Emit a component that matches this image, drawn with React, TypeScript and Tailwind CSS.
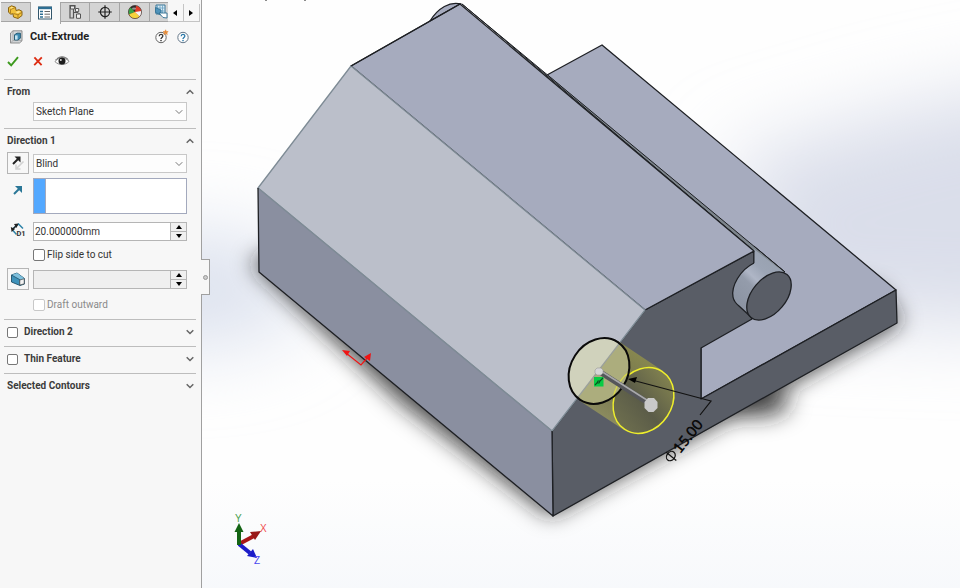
import { ReactNode, useState } from 'react'

type IconProps = { className?: string }

const PartIcon: React.FC<IconProps> = ({ className = 'size-4' }) => (
  <svg viewBox="0 0 16 16" className={className} aria-hidden="true">
    <path
      d="M1.500 3.500 4.500 1.800 8.500 3.200 9 6.500l3-.8 3 1.600v4.200L11 14.500 6.500 13 6 9.800 3.500 10.200 1.500 8z"
      fill="#f2c23c"
      stroke="#8a6516"
      strokeWidth="1"
      strokeLinejoin="round"
    />
    <path d="M3.500 5.500 8.500 3.500M3.500 5.500v4M6.500 9.500l4.500 1.300 4-2.500M11 11v3" fill="none" stroke="#a87a1c" strokeWidth=".9" />
    <path d="m3 3.800 1.800-.9 2 .7-2.200.9zM8.500 8l3.400-1 1.600.8-2.800 1.400z" fill="#ffe795" />
  </svg>
)

const PropertyIcon: React.FC<IconProps> = ({ className = 'size-4' }) => (
  <svg viewBox="0 0 16 16" className={className} aria-hidden="true">
    <rect x="1.5" y="2" width="13" height="12" fill="#fff" stroke="#33566b" />
    <path d="M1 3h14" stroke="#2d6d91" strokeWidth="2.4" />
    <path d="M3 6.500h3M3 9.200h3M3 12h3" stroke="#2d6d91" strokeWidth="1.6" />
    <path d="M7.500 6.500h5.500M7.500 9.200h5.500M7.500 12h5.500" stroke="#555" strokeWidth=".9" />
  </svg>
)

const ConfigIcon: React.FC<IconProps> = ({ className = 'size-4' }) => (
  <svg viewBox="0 0 16 16" className={className} aria-hidden="true">
    <path d="M3 14.500V1.500h5v3M3 14h3.500V5" fill="none" stroke="#555" strokeWidth="1.2" />
    <path d="M3.500 2h4v3h-4z" fill="#eee" stroke="#555" />
    <path d="M8.500 4.500h3.200v3.200H8.500zM9.500 10h4v4.300h-4z" fill="#f2f2f2" stroke="#555" />
    <path d="M6.500 8.500h4.500l1.500 1.500" fill="none" stroke="#555" />
  </svg>
)

const TargetIcon: React.FC<IconProps> = ({ className = 'size-4' }) => (
  <svg viewBox="0 0 16 16" className={className} aria-hidden="true">
    <circle cx="8" cy="8" r="4.6" fill="none" stroke="#222" strokeWidth="1.2" />
    <path d="M8 1.200v13.600M1.200 8h13.600" stroke="#222" strokeWidth="1.2" />
  </svg>
)

const AppearanceIcon: React.FC<IconProps> = ({ className = 'size-4' }) => (
  <svg viewBox="0 0 16 16" className={className} aria-hidden="true">
    <circle cx="8" cy="8" r="6.6" fill="#e03a26" />
    <path d="M8 8 4 2.800A6.600 6.600 0 0 0 2 10.600z" fill="#39a345" />
    <path d="M8 8 2 10.600A6.600 6.600 0 0 0 12.800 12.600z" fill="#f5d33c" />
    <path d="M8 8 12.800 12.600A6.600 6.600 0 0 0 14.500 7z" fill="#f4f4f4" />
    <path d="M8 8 3.400 3.300A6.600 6.600 0 0 1 9 1.500z" fill="#2a2a2a" />
    <circle cx="8" cy="8" r="6.6" fill="none" stroke="#444" strokeWidth=".7" />
    <ellipse cx="7" cy="4.6" rx="2" ry="1.2" fill="#fff" opacity=".5" />
  </svg>
)

const CamIcon: React.FC<IconProps> = ({ className = 'size-4' }) => (
  <svg viewBox="0 0 16 16" className={className} aria-hidden="true">
    <path d="M4 1h9v9H4z" fill="#dcecf5" stroke="#2d6d91" strokeWidth=".9" />
    <path d="M5.500 1v9M8 1v9M10.500 1v9M4 4h9M4 7h9" stroke="#6ba3c4" strokeWidth=".8" />
    <path d="M3.500 3.500 9 6v5L3.500 8.500z" fill="#4f93ba" stroke="#2d6d91" strokeWidth=".8" />
    <path d="m7 9 4 4.500 4 .5V9z" fill="#fff" stroke="#2d6d91" strokeWidth=".9" />
  </svg>
)

const CutExtrudeIcon: React.FC<IconProps> = ({ className = 'size-4' }) => (
  <svg viewBox="0 0 16 16" className={className} aria-hidden="true">
    <path d="M2.500 4 5 1.800h9v10L11.500 14h-9z" fill="#d5d8da" stroke="#777" strokeWidth=".8" />
    <path d="M5 1.800v9.800h9M5 11.600 2.500 14" fill="none" stroke="#999" strokeWidth=".7" />
    <path d="M6.500 5.800 9 4.200h3.400v5L10 11H6.500z" fill="#3b8ab2" stroke="#1f566f" strokeWidth=".9" />
    <path d="M7 6.400h2.600v4.200H7z" fill="#c4e3f1" />
  </svg>
)

const HelpIcon: React.FC<{ star?: boolean }> = ({ star }) => (
  <svg viewBox="0 0 16 16" className="size-4" aria-hidden="true">
    <circle cx="8" cy="8.500" r="5.2" fill="#fdfdfd" stroke={star ? '#666' : '#66788a'} strokeWidth="1" />
    <path
      d="M6.200 7.200c0-2.400 3.600-2.300 3.600-.2 0 1.400-1.800 1.400-1.800 3"
      fill="none"
      stroke={star ? '#333' : '#2a78a8'}
      strokeWidth="1.3"
    />
    <circle cx="8" cy="11.600" r=".8" fill={star ? '#333' : '#2a78a8'} />
    {star && <path d="m12.600.8.7 1.700 1.900.1-1.400 1.200.5 1.800-1.700-1-1.600 1 .4-1.800-1.400-1.200 1.900-.1z" fill="#e58a35" stroke="#e58a35" strokeWidth=".6" />}
  </svg>
)

const EyeIcon = () => (
  <svg viewBox="0 0 16 16" className="size-4" aria-hidden="true">
    <path d="M1 8.600C4 4 11.500 3.600 15 8.400 11.500 12.400 5 12.600 1 8.600z" fill="#fff" stroke="#777" strokeWidth=".9" />
    <path d="M1.600 7C5 2.800 11 2.800 14.400 6.800" fill="none" stroke="#555" strokeWidth=".9" />
    <circle cx="8" cy="8" r="3.5" fill="#1d1d1d" />
    <circle cx="6.8" cy="6.900" r="1" fill="#ddd" />
  </svg>
)

const ReverseIcon = () => (
  <svg viewBox="0 0 16 16" className="size-4" aria-hidden="true">
    <path d="m6.500 13.500 7-7M6 9.500V14h4.500" fill="none" stroke="#d2d2d2" strokeWidth="1.6" />
    <path d="m3 9 6-6" stroke="#222" strokeWidth="2" />
    <path d="M4.500 1.500h6v6z" fill="#222" />
  </svg>
)

const DirectionIcon = () => (
  <svg viewBox="0 0 16 16" className="size-4" aria-hidden="true">
    <path d="m4 12 6-6" stroke="#2a7797" strokeWidth="2" />
    <path d="M5 4h7v7z" fill="#2a7797" />
  </svg>
)

const DepthIcon = () => (
  <svg viewBox="0 0 16 16" className="size-4" aria-hidden="true">
    <path d="m2.500 7 6-5L13 6.500M2.500 8l4 4.500" fill="none" stroke="#2f83a8" strokeWidth="1.5" />
    <path d="m3 7 4-4" stroke="#222" strokeWidth="1.3" />
    <path d="M4 2 8.500 1.500 6.500 6zM.8 5l.8 5L5 7z" fill="#222" />
    <text x="6.500" y="14" fontSize="7.500" fontWeight="700" fill="#333" fontFamily="Roboto, sans-serif">
      D1
    </text>
  </svg>
)

const DraftIcon = () => (
  <svg viewBox="0 0 16 16" className="size-4" aria-hidden="true">
    <path d="M1.500 4 7 2l7.500 5.500V13l-4.500 1.500L1.500 11z" fill="#3f93bb" stroke="#1d4f68" strokeWidth=".9" />
    <path d="M1.500 4 9.500 8.500l5-1L7 2z" fill="#7fc0dd" />
    <path d="m1.500 4 8 4.500V14" fill="none" stroke="#1d4f68" strokeWidth=".8" />
    <path d="m9.800 9 4.400-1.200v5L9.800 14z" fill="#f3f3f3" stroke="#555" strokeWidth=".7" />
  </svg>
)

const Chevron: React.FC<{ up?: boolean; thin?: boolean }> = ({ up, thin }) => (
  <svg viewBox="0 0 8 8" className="size-2" aria-hidden="true">
    <path
      d={up ? 'M.7 5.800 4 2.500l3.300 3.300' : 'M.7 2.200 4 5.500l3.300-3.300'}
      fill="none"
      stroke={thin ? '#777' : '#666'}
      strokeWidth={thin ? 1 : 1.5}
    />
  </svg>
)

const tabs = [
  { label: 'Feature tree', icon: <PartIcon /> },
  { label: 'Properties', icon: <PropertyIcon /> },
  { label: 'Configurations', icon: <ConfigIcon /> },
  { label: 'Dimensions', icon: <TargetIcon /> },
  { label: 'Display', icon: <AppearanceIcon /> },
]

const TabBar: React.FC = () => {
  const [active, setActive] = useState(1)
  return (
    <div className="flex h-6 items-stretch px-px pt-0.5">
      {tabs.map((tab, i) => (
        <button
          key={tab.label}
          aria-label={tab.label}
          onClick={() => setActive(i)}
          className={
            i === active
              ? 'flex flex-1 items-center justify-center border-r border-[#a5a5a5] bg-[#f7f7f7]'
              : 'mb-0.5 flex flex-1 items-center justify-center border border-l-0 border-[#a5a5a5] bg-[#d4d4d4]'
          }
        >
          {tab.icon}
        </button>
      ))}
      <button
        aria-label="CAM"
        className="mb-0.5 flex w-[18px] items-center justify-end overflow-hidden border-y border-[#a5a5a5] bg-[#d4d4d4]"
      >
        <CamIcon className="size-4 shrink-0" />
      </button>
      {['left', 'right'].map((side) => (
        <button
          key={side}
          aria-label={`Scroll ${side}`}
          className="mt-0.5 mb-0.5 flex w-4 items-center justify-center border-r border-b border-[#c4c4c4] bg-[#f7f7f7]"
        >
          <svg viewBox="0 0 6 6" className="size-1.5" aria-hidden="true">
            <path d={side === 'left' ? 'M5 0v6L1 3z' : 'M1 0v6l4-3z'} />
          </svg>
        </button>
      ))}
    </div>
  )
}

type SectionProps = { title: string; open?: boolean; check?: boolean; children?: ReactNode }

const Section: React.FC<SectionProps> = ({ title, open, check, children }) => (
  <section className="mr-[5px] ml-1 border-t border-[#bdbdbd] pl-[3px]">
    <div className="flex h-[26px] items-center pr-0.5 pb-0.5">
      {check && (
        <input
          type="checkbox"
          aria-label={title}
          className="mr-1.5 size-[11px] appearance-none rounded-xs border border-[#777] bg-white checked:bg-[#2a7797]"
        />
      )}
      <h2 className="flex-1 font-bold text-[#3c3c3c]">{title}</h2>
      <button aria-label={`Toggle ${title}`}>
        <Chevron up={open} />
      </button>
    </div>
    {children}
  </section>
)

const Row: React.FC<{ icon?: ReactNode; children: ReactNode }> = ({ icon, children }) => (
  <div className="flex items-start gap-1 pr-[9px]">
    <div className="flex w-[22px] shrink-0 justify-center">{icon}</div>
    <div className="min-w-0 flex-1">{children}</div>
  </div>
)

const SelectBox: React.FC<{ label: string; options: string[] }> = ({ label, options }) => (
  <div className="relative">
    <select
      aria-label={label}
      className="block h-[19px] w-full appearance-none border border-[#c8c8c8] bg-[#fdfdfd] px-0.5 text-[#333]"
    >
      {options.map((o) => (
        <option key={o}>{o}</option>
      ))}
    </select>
    <span className="pointer-events-none absolute inset-y-0 right-1 flex items-center">
      <Chevron thin />
    </span>
  </div>
)

const SpinBox: React.FC<{ label: string; value: string; disabled?: boolean }> = ({ label, value, disabled }) => (
  <div className="flex h-[19px] border border-[#b5b5b5] bg-white">
    <input
      aria-label={label}
      defaultValue={value}
      disabled={disabled}
      className="min-w-0 flex-1 px-px text-[#333] disabled:bg-[#efefef]"
    />
    <div className="flex w-4 flex-col border-l border-[#b5b5b5]">
      {['up', 'down'].map((dir) => (
        <button
          key={dir}
          aria-label={`${label} ${dir}`}
          className="flex flex-1 items-center justify-center border-b border-[#b5b5b5] bg-[#f0f0f0] last:border-b-0"
        >
          <svg viewBox="0 0 6 4" className="h-1 w-1.5" aria-hidden="true">
            <path d={dir === 'up' ? 'M0 4h6L3 0z' : 'M0 0h6L3 4z'} />
          </svg>
        </button>
      ))}
    </div>
  </div>
)

const CheckRow: React.FC<{ label: string; disabled?: boolean }> = ({ label, disabled }) => (
  <label className={disabled ? 'flex h-5 items-center gap-0.5 text-[#8a8a8a]' : 'flex h-5 items-center gap-0.5 text-[#333]'}>
    <input
      type="checkbox"
      disabled={disabled}
      className="size-3 appearance-none rounded-xs border border-[#777] bg-white checked:bg-[#2a7797] disabled:border-[#c8c8c8]"
    />
    {label}
  </label>
)

const PropertyPanel: React.FC = () => (
  <aside className="relative z-10 w-[202px] shrink-0 border-r border-[#a0a0a0] bg-[#f7f7f7] text-[10px] leading-4">
    <TabBar />
    <div className="flex h-[26px] items-center pr-2.5 pl-2">
      <CutExtrudeIcon />
      <h1 className="ml-1.5 flex-1 text-[11px] font-bold text-[#1f1f1f]">Cut-Extrude</h1>
      <button aria-label="What's new" className="mr-1.5">
        <HelpIcon star />
      </button>
      <button aria-label="Help">
        <HelpIcon />
      </button>
    </div>
    <div className="flex h-[29px] items-center gap-2 pb-2 pl-[5px]">
      <button aria-label="OK">
        <svg viewBox="0 0 16 16" className="size-4" aria-hidden="true">
          <path d="m3 9 3.200 3.400L13 4.200" fill="none" stroke="#3d9a1e" strokeWidth="1.9" />
        </svg>
      </button>
      <button aria-label="Cancel" className="ml-px">
        <svg viewBox="0 0 16 16" className="size-4" aria-hidden="true">
          <path d="m4.400 4.400 7.200 7.800M11.800 4.400l-7.600 7.800" stroke="#dd2c12" strokeWidth="1.8" />
        </svg>
      </button>
      <button aria-label="Preview">
        <EyeIcon />
      </button>
    </div>

    <Section title="From" open>
      <div className="-mt-1 pb-[7px]">
        <Row>
          <SelectBox label="Start condition" options={['Sketch Plane', 'Offset']} />
        </Row>
      </div>
    </Section>

    <Section title="Direction 1" open>
      <div className="-mt-[3px] flex flex-col pb-1">
        <Row
          icon={
            <button aria-label="Reverse direction" className="flex size-[22px] items-center justify-center border border-[#b5b5b5]">
              <ReverseIcon />
            </button>
          }
        >
          <div className="pt-0.5">
            <SelectBox label="End condition" options={['Blind', 'Through All']} />
          </div>
        </Row>
        <div className="pt-1">
          <Row
            icon={
              <span className="pt-1">
                <DirectionIcon />
              </span>
            }
          >
            <div className="flex h-9 border border-[#a3a9bd] bg-white">
              <span className="w-3 border-r border-[#a3a9bd] bg-[#53a8ff]" />
            </div>
          </Row>
        </div>
        <div className="pt-2">
          <Row icon={<DepthIcon />}>
            <SpinBox label="Depth" value="20.000000mm" />
          </Row>
        </div>
        <div className="pt-1 pb-[3px]">
          <Row>
            <CheckRow label="Flip side to cut" />
          </Row>
        </div>
        <Row
          icon={
            <button aria-label="Draft" className="flex size-[22px] items-center justify-center border border-[#b5b5b5]">
              <DraftIcon />
            </button>
          }
        >
          <div className="pt-0.5">
            <SpinBox label="Draft angle" value="" disabled />
          </div>
        </Row>
        <div className="pt-[5px]">
          <Row>
            <CheckRow label="Draft outward" disabled />
          </Row>
        </div>
      </div>
    </Section>

    <Section title="Direction 2" check />
    <Section title="Thin Feature" check />
    <Section title="Selected Contours" />

    <button
      aria-label="Collapse panel"
      className="absolute top-[259px] left-[201px] flex h-9 w-[9px] items-center justify-center border border-l-0 border-[#a0a0a0] bg-[#f7f7f7]"
    >
      <span className="size-[5px] rounded-full border border-[#999] bg-[#ccc]" />
    </button>
  </aside>
)

const Backdrop = () => (
  <g>
    <rect x="0" y="0" width="1200" height="700" fill="#fefefe" />
    <ellipse cx="190" cy="290" rx="120" ry="56" fill="#dbe1ee" filter="url(#haze)" />
    <path d="M1100 70 900 110 730 160 780 320 1100 330z" fill="#dadeea" filter="url(#haze)" />
    <rect x="150" y="480" width="900" height="120" fill="url(#floor)" />
    <g filter="url(#shadow)" fill="#222">
      <path d="M250 262 400 402 550 516 760 402 902 322 880 290 400 200z" opacity=".8" />
      <ellipse cx="756" cy="403" rx="34" ry="14" opacity=".75" />
    </g>
  </g>
)

const Body = () => (
  <g stroke="#1e2024" strokeWidth="1.3" strokeLinejoin="round">
    {/* base plate */}
    <path d="M547 75 602 45 896 290 701 399V348L754 251z" fill="#a6abbe" />
    {/* rod behind the top edge */}
    <path d="M430 21C438 8 450 1 461 4z" fill="#a6abbe" />
    <path d="M462 4 785 272 754 285V251z" fill="#7d858c" strokeWidth="1" />
    {/* front face */}
    <path d="M645 310 754 251V263L735 290 752 319 701 348V399L896 290 897 323 553 516 552 431z" fill="#595d66" />
    {/* boss */}
    <path d="M754 263C740 270 731 286 733 297Q734 302 739 306L752 318 785 273 754 249z" fill="url(#boss)" stroke="none" />
    <path d="M754 263C740 270 731 286 733 297Q734 302 739 306L752 318" fill="none" />
    <path d="M754 251V263M754 246 785 272" fill="none" strokeWidth="1" />
    <ellipse cx="769" cy="296" rx="17" ry="28" transform="rotate(40 769 296)" fill="#595d66" />
    {/* top, chamfer and side */}
    <path d="M351 66 460 4 754 251 645 310z" fill="#a6abbe" />
    <path d="M351 66 645 310 552 431 258 188z" fill="#bbbfca" stroke="#7e8b95" />
    <path d="M258 188 552 431 553 516 259 272z" fill="#8a8fa0" stroke="none" />
    <path d="M258 188 552 431" stroke="#7e8b95" />
    <path d="M351 66 460 4M258 188 259 272 553 516 552 431" fill="none" />
  </g>
)

const CutPreview = () => (
  <g>
    <path d="M618 341 663 371 624 430 580 401z" fill="url(#cut)" />
    <ellipse cx="643.5" cy="400.5" rx="28.5" ry="34.5" transform="rotate(33 643.5 400.5)" fill="url(#cutEnd)" stroke="#eeee2c" strokeWidth="1.5" />
    <g clipPath="url(#profile)">
      <rect x="560" y="330" width="80" height="80" fill="#d0d2bc" />
      <path d="M645 310 552 431 640 431z" fill="#acad7d" />
      <path d="M645 310 552 431" stroke="#9aa09c" strokeWidth="1.3" />
      <path d="M613 409C611 388 624 371 641 367" fill="none" stroke="#d8d84c" strokeWidth="1.4" />
    </g>
    <ellipse cx="599" cy="371" rx="28.5" ry="34.5" transform="rotate(33 599 371)" fill="none" stroke="#0a0a0a" strokeWidth="2" />
    <path d="M600 372 650 404" stroke="#55565a" strokeWidth="5.5" />
    <path d="M601 371 650 402" stroke="#a8a8aa" strokeWidth="1.6" />
    <path d="M597 368h4l2 2v3l-2 2h-4l-2-2v-3z" fill="#d6d6d6" stroke="#999" strokeWidth=".6" />
    <path d="m648 398 6 0 3.500 4v6l-4 4h-5l-4-4v-6z" fill="#c9c9c9" />
    <rect x="594" y="377" width="9.5" height="9.5" fill="#07cc45" />
    <path d="m595 385 2-2 1-2h2l3-3M597 383h2l1-2" fill="none" stroke="#08531f" strokeWidth="1.1" />
  </g>
)

const Dimension = () => (
  <g fill="none" stroke="#111" strokeWidth="1.2">
    <path d="M632 380 711 401 700 415" />
    <path d="m628 379 9-2-2 6z" fill="#000" stroke="none" />
    <g transform="translate(673 463) rotate(-51)">
      <ellipse cx="4" cy="-6" rx="5" ry="4" />
      <path d="M4-12V1" />
      <text x="11" y="0" fontSize="15" fontWeight="700" fill="#0a0a0a" stroke="none" fontFamily="Lato, sans-serif">
        15.00
      </text>
    </g>
  </g>
)

const Triad = () => (
  <g strokeWidth="4" fontSize="10" fontFamily="'Liberation Sans', sans-serif">
    <path d="M239 544 254 536" stroke="#a81818" />
    <path d="m250 532 11-1-6 9z" fill="#981818" />
    <path d="M239 544 250 553" stroke="#1c1cc8" />
    <path d="m253 549 4 9-10-2z" fill="#1c1cc8" />
    <path d="M239 545V531" stroke="#146414" />
    <path d="m239 523 4.500 9h-9z" fill="#146414" />
    <text x="235" y="522" fill="#4aa050">
      Y
    </text>
    <text x="260" y="532" fill="#f05050">
      X
    </text>
    <text x="254" y="564" fill="#4848f0">
      Z
    </text>
  </g>
)

const Viewport: React.FC = () => (
  <main className="min-w-0 flex-1 overflow-hidden bg-white">
    <svg
      viewBox="202 0 758 588"
      preserveAspectRatio="xMidYMid slice"
      className="block h-full w-full"
      role="img"
      aria-label="Part model"
    >
      <defs>
        <filter id="haze" x="-60%" y="-120%" width="220%" height="340%">
          <feGaussianBlur stdDeviation="40" />
        </filter>
        <filter id="shadow" x="-20%" y="-40%" width="140%" height="180%">
          <feGaussianBlur stdDeviation="11" />
        </filter>
        <linearGradient id="floor" x1="0" y1="0" x2="0" y2="1">
          <stop offset="0" stopColor="#f6f8fb" stopOpacity="0" />
          <stop offset="1" stopColor="#f6f8fb" />
        </linearGradient>
        <linearGradient id="boss" gradientUnits="userSpaceOnUse" x1="738" y1="306" x2="780" y2="262">
          <stop offset="0" stopColor="#8b93a2" />
          <stop offset=".4" stopColor="#949cab" />
          <stop offset=".52" stopColor="#afb6c6" />
          <stop offset=".7" stopColor="#9ca5b5" />
          <stop offset="1" stopColor="#98a1b0" />
        </linearGradient>
        <linearGradient id="cut" gradientUnits="userSpaceOnUse" x1="640" y1="356" x2="602" y2="416">
          <stop offset="0" stopColor="#87874f" />
          <stop offset=".5" stopColor="#74744e" />
          <stop offset="1" stopColor="#8b8b5e" />
        </linearGradient>
        <linearGradient id="cutEnd" gradientUnits="userSpaceOnUse" x1="656" y1="370" x2="636" y2="432">
          <stop offset="0" stopColor="#80804f" />
          <stop offset=".55" stopColor="#5b5c48" />
          <stop offset="1" stopColor="#6c6d4e" />
        </linearGradient>
        <clipPath id="profile">
          <ellipse cx="599" cy="371" rx="28.5" ry="34.5" transform="rotate(33 599 371)" />
        </clipPath>
      </defs>
      <Backdrop />
      <path d="M265 0h2M304 0h2" stroke="#666" strokeWidth="1.5" />
      <Body />
      <CutPreview />
      <Dimension />
      <g stroke="#f01414" fill="#f01414" strokeWidth="1.2">
        <path d="M346 353 361 365 368 357" fill="none" />
        <path d="m342 350 8 1-3 5zM371 353l-1 8-6-4z" stroke="none" />
      </g>
      <Triad />
    </svg>
  </main>
)

const App: React.FC = () => (
  <div className="flex h-screen font-['Roboto','Open_Sans',sans-serif]">
    <PropertyPanel />
    <Viewport />
  </div>
)

export default App
